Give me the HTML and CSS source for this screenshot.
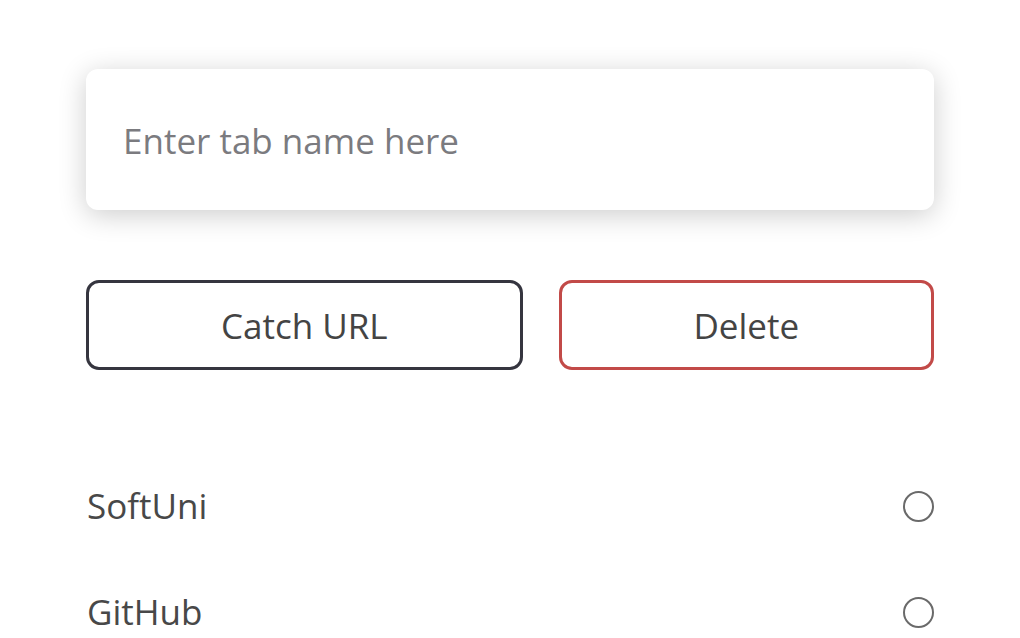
FILE: index.html
```html
<!DOCTYPE html>
<html lang="en">
<head>
<meta charset="utf-8">
<title>Tab Catcher</title>
<link rel="stylesheet" href="styles.css">
</head>
<body>
<main class="app">
  <div class="input-card">
    <input class="tab-input" type="text" placeholder="Enter tab name here">
  </div>
  <div class="actions">
    <button class="btn btn-catch">Catch URL</button>
    <button class="btn btn-delete">Delete</button>
  </div>
  <ul class="tab-list">
    <li class="tab-item"><span class="tab-name">SoftUni</span><span class="tab-radio"></span></li>
    <li class="tab-item"><span class="tab-name">GitHub</span><span class="tab-radio"></span></li>
  </ul>
</main>
</body>
</html>
```

FILE: styles.css
```css
html, body {
  margin: 0;
  padding: 0;
  background: #ffffff;
}

body {
  font-family: "Open Sans", "Noto Sans", sans-serif;
  color: #444;
  overflow: hidden;
}

.app {
  width: 848px;
  padding: 69px 86px 0;
}

.input-card {
  height: 141px;
  border-radius: 12px;
  background: #fff;
  box-shadow: 0 5px 28px rgba(0, 0, 0, 0.2);
  display: flex;
  align-items: center;
}

.tab-input {
  flex: 1;
  border: none;
  outline: none;
  background: transparent;
  font-family: inherit;
  font-size: 35px;
  color: #444;
  padding: 0 37px;
  margin-top: 2px;
}

.tab-input::placeholder {
  color: #7b7b7f;
}

.actions {
  display: flex;
  gap: 36px;
  margin-top: 70px;
}

.btn {
  flex: 1 1 auto;
  height: 90px;
  background: #fff;
  border-radius: 13px;
  font-family: inherit;
  font-size: 35px;
  color: #444;
  padding: 0 20px;
}

.btn-catch {
  border: 3.5px solid #35353f;
}

.btn-delete {
  border: 3px solid #c24a48;
}

.tab-list {
  list-style: none;
  margin: 106px 0 0;
  padding: 0;
  display: flex;
  flex-direction: column;
  gap: 46px;
}

.tab-item {
  height: 60px;
  line-height: 60px;
  display: flex;
  justify-content: space-between;
  align-items: center;
  font-size: 35px;
  color: #484848;
}

.tab-name {
  margin-left: 1px;
}

.tab-radio {
  width: 27px;
  height: 27px;
  border: 2.5px solid #6a6a6a;
  border-radius: 50%;
  box-sizing: content-box;
  margin-right: 0;
}
```
